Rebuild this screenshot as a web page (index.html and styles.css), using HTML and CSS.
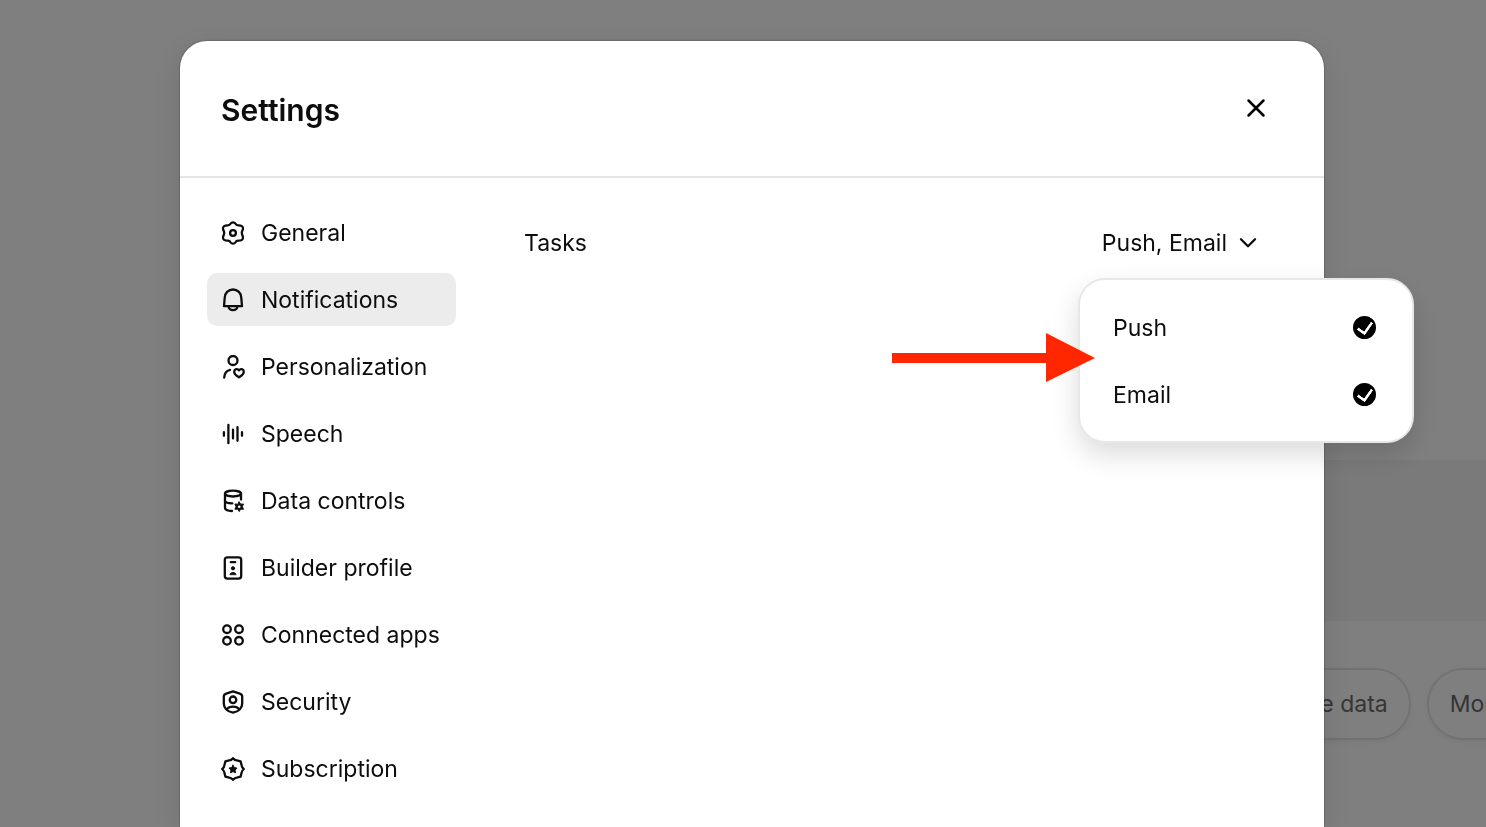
FILE: index.html
```html
<!DOCTYPE html>
<html lang="en">
<head>
    <meta charset="UTF-8">
    <meta name="viewport" content="width=device-width, initial-scale=1.0">
    <title>Settings</title>
    <link rel="stylesheet" href="styles.css">
</head>
<body>
    <!-- Page behind the dialog -->
    <main class="page">
        <div class="composer"></div>
        <div class="chips">
            <button class="chip" type="button">Analyze data</button>
            <button class="chip" type="button">More</button>
        </div>
    </main>

    <div class="overlay">
        <section class="modal" role="dialog" aria-labelledby="modalTitle">
            <header class="modal-header">
                <h2 id="modalTitle">Settings</h2>
                <button class="close" type="button" aria-label="Close">
                    <svg width="20" height="20" viewBox="0 0 20 20"><path d="M2.5 2.5l15 15M17.5 2.5l-15 15"/></svg>
                </button>
            </header>

            <div class="modal-body">
                <nav class="sidebar">
                    <button class="tab" type="button">
                        <svg class="icon" viewBox="0 0 24 24"><path d="M9.7 2.5C10.7 .9 13.3 .9 14.3 2.5C15 3.8 16 4.3 17.3 4.3C20.2 4.2 22.4 5.5 22 8C21.8 9.4 20.8 10.2 20.8 12C20.8 13.8 21.8 14.6 22 16C22.4 18.5 20.2 19.8 17.3 19.7C16 19.7 15 20.2 14.3 21.5C13.3 23.1 10.7 23.1 9.7 21.5C9 20.2 8 19.7 6.7 19.7C3.8 19.8 1.6 18.5 2 16C2.2 14.6 3.2 13.8 3.2 12C3.2 10.2 2.2 9.4 2 8C1.6 5.5 3.8 4.2 6.7 4.3C8 4.3 9 3.8 9.7 2.5Z"/><circle cx="12" cy="12" r="2.9"/></svg>
                        General
                    </button>
                    <button class="tab active" type="button">
                        <svg class="icon" viewBox="0 0 24 24"><path d="M3 18.2L3.7 9.8A8.3 8.3 0 0 1 20.3 9.8L21 18.2Z"/><path d="M7.6 18.6A4.4 3.6 0 0 0 16.4 18.6"/></svg>
                        Notifications
                    </button>
                    <button class="tab" type="button">
                        <svg class="icon" viewBox="0 0 24 24"><circle cx="12" cy="5.5" r="4.5"/><path d="M3.2 22.6C3.4 18.8 5.4 15.8 9 14.9"/><path d="M18 22.3C14.8 20.4 13.1 18.5 13.2 16.6C13.3 14 16.5 13.3 18 15.4C19.5 13.3 22.7 14 22.8 16.6C22.9 18.5 21.2 20.4 18 22.3Z"/></svg>
                        Personalization
                    </button>
                    <button class="tab" type="button">
                        <svg class="icon" viewBox="0 0 24 24"><path d="M2.9 10.2v3.6M7.4 2.8v18.4M12 7.6v8.8M16.5 5.2v13.6M21 10.2v3.6"/></svg>
                        Speech
                    </button>
                    <button class="tab" type="button">
                        <svg class="icon" viewBox="0 0 24 24"><ellipse cx="12" cy="4.6" rx="8" ry="2.9"/><path d="M4 4.6v14.2C4 20.6 6.6 21.8 11 22"/><path d="M4 11.7C4 13.2 7 14.2 11.3 14.4"/><path d="M20 4.6v6"/><path class="solid" d="M18.2 12.9l1.5 2.3 2.8-.2-1.2 2.7 1.2 2.6-2.8-.2-1.5 2.4-1.5-2.4-2.8 .2 1.2-2.6-1.2-2.7 2.8 .2Z"/><circle class="hole" cx="18.2" cy="17.7" r="1.3"/></svg>
                        Data controls
                    </button>
                    <button class="tab" type="button">
                        <svg class="icon" viewBox="0 0 24 24"><rect x="3.8" y="1.4" width="16.4" height="21.2" rx="2.6"/><path d="M9.8 6.2h4.4"/><circle class="solid" cx="12" cy="12.3" r="1.6"/><path class="solid" d="M9 18.3C9.4 16 14.6 16 15 18.3Z"/></svg>
                        Builder profile
                    </button>
                    <button class="tab" type="button">
                        <svg class="icon" viewBox="0 0 24 24"><circle cx="6" cy="6.2" r="3.8"/><circle cx="18" cy="6.2" r="3.8"/><circle cx="6" cy="17.8" r="3.8"/><circle cx="18" cy="17.8" r="3.8"/></svg>
                        Connected apps
                    </button>
                    <button class="tab" type="button">
                        <svg class="icon" viewBox="0 0 24 24"><path d="M12 1.3L18.8 3.6C20.3 4.1 21.2 5 21.2 6.6V13.5C21.2 17.5 18 21.5 12 22.7C6 21.5 2.8 17.5 2.8 13.5V6.6C2.8 5 3.7 4.1 5.2 3.6Z"/><circle cx="12" cy="9.8" r="3.3"/><path d="M6 19.2C8.2 15.7 15.8 15.7 18 19.2"/></svg>
                        Security
                    </button>
                    <button class="tab" type="button">
                        <svg class="icon" viewBox="0 0 24 24"><path d="M12 1.2Q13.8 3.3 15.8 3.4L19.6 4.4L20.6 8.2Q20.7 10.2 22.8 12Q20.7 13.8 20.6 15.8L19.6 19.6L15.8 20.6Q13.8 20.7 12 22.8Q10.2 20.7 8.2 20.6L4.4 19.6L3.4 15.8Q3.3 13.8 1.2 12Q3.3 10.2 3.4 8.2L4.4 4.4L8.2 3.4Q10.2 3.3 12 1.2Z"/><path class="solid" d="M12 8.2l1.3 2.4 2.7 .5-1.9 2 .4 2.7-2.5-1.2-2.5 1.2 .4-2.7-1.9-2 2.7-.5Z"/></svg>
                        Subscription
                    </button>
                </nav>

                <div class="content">
                    <div class="setting">
                        <span>Tasks</span>
                        <div class="dropdown">
                            <button class="dropdown-toggle" type="button" aria-haspopup="true" aria-expanded="true">
                                Push, Email
                                <svg width="18" height="18" viewBox="0 0 18 18"><path d="M2 5.2l7 7 7-7"/></svg>
                            </button>
                            <div class="menu">
                                <label class="menu-item" for="push">Push <input id="push" type="checkbox" checked></label>
                                <label class="menu-item" for="email">Email <input id="email" type="checkbox" checked></label>
                            </div>
                            <svg class="arrow" width="203" height="50" viewBox="0 0 203 50"><path d="M0 20h154V0l49 25-49 24V30H0Z"/></svg>
                        </div>
                    </div>
                </div>
            </div>
        </section>
    </div>
</body>
</html>
```
FILE: styles.css
```css
* {
    box-sizing: border-box;
}
body {
    margin: 0;
    height: 100vh;
    overflow: hidden;
    background-color: #fff;
    color: #0d0d0d;
    font-family: Inter, "Liberation Sans", sans-serif;
    font-size: 23px;
    line-height: 32px;
}
button {
    font: inherit;
    color: inherit;
    border: none;
    background: none;
    padding: 0;
    cursor: pointer;
}
svg {
    flex: none;
    fill: none;
    stroke: currentColor;
    stroke-width: 2.3;
    stroke-linecap: round;
    stroke-linejoin: round;
}

/* Page behind the dialog */
.page {
    padding-top: 460px;
}
.composer {
    height: 161px;
    margin-left: 180px;
    background-color: #f4f4f4;
}
.chips {
    display: flex;
    justify-content: flex-end;
    gap: 16px;
    margin: 47px -43px 0 0;
}
.chip {
    padding: 18px 21px;
    border: 2px solid #e5e5e5;
    border-radius: 36px;
    color: #6b6b6b;
    box-shadow: 0 2px 6px rgba(0, 0, 0, 0.06);
}

/* Dialog */
.overlay {
    position: fixed;
    inset: 0;
    display: flex;
    padding: 41px 162px 0 180px;
    background-color: rgba(0, 0, 0, 0.5);
}
.modal {
    flex: 1;
    background-color: #fff;
    border-radius: 27px 27px 0 0;
    box-shadow: 0 8px 32px rgba(0, 0, 0, 0.12), 0 0 2px rgba(0, 0, 0, 0.5);
}
.modal-header {
    display: flex;
    align-items: center;
    justify-content: space-between;
    padding: 49px 58px 46px 41px;
    border-bottom: 2px solid #e5e5e5;
}
.modal-header h2 {
    margin: 0;
    font-size: 30px;
    font-weight: 600;
    line-height: 40px;
}
.close {
    display: flex;
    padding-bottom: 4px;
}
.close svg {
    stroke: #000;
    stroke-width: 2.5;
}
.modal-body {
    display: flex;
    padding: 28px 27px 0;
}

/* Tabs on the left */
.sidebar {
    display: flex;
    flex-direction: column;
    gap: 14px;
    width: 249px;
}
.tab {
    display: flex;
    align-items: center;
    gap: 16px;
    height: 53px;
    padding: 0 14px;
    border-radius: 10px;
    text-align: left;
    white-space: nowrap;
}
.tab.active {
    background-color: #ececec;
}
.icon {
    width: 24px;
    height: 24px;
}
.icon .solid {
    fill: currentColor;
    stroke-width: 1;
}
.icon .hole {
    fill: #fff;
    stroke: none;
}

/* Selected tab content */
.content {
    flex: 1;
    padding: 21px 40px 0 68px;
}
.setting {
    display: flex;
    justify-content: space-between;
}
.dropdown {
    position: relative;
}
.dropdown-toggle {
    display: flex;
    align-items: center;
    gap: 12px;
}
.menu {
    position: absolute;
    top: 51px;
    right: -157px;
    width: 336px;
    padding: 14px 36px 13px 33px;
    border: 2px solid #e7e7e7;
    border-radius: 27px;
    background-color: #fff;
    box-shadow: 0 12px 28px rgba(0, 0, 0, 0.14);
}
.menu-item {
    display: flex;
    align-items: center;
    justify-content: space-between;
    height: 67px;
    cursor: pointer;
}
.menu-item input {
    appearance: none;
    display: flex;
    align-items: center;
    justify-content: center;
    width: 23px;
    height: 23px;
    margin: 0;
    border: 2px solid #000;
    border-radius: 50%;
}
.menu-item input:checked {
    background-color: #000;
}
.menu-item input:checked::after {
    content: "";
    width: 7px;
    height: 12px;
    margin-bottom: 2px;
    border: solid #fff;
    border-width: 0 3px 3px 0;
    border-radius: 1px;
    transform: rotate(35deg);
}
.arrow {
    position: absolute;
    top: 106px;
    right: 162px;
    fill: #ff2600;
    stroke: none;
    pointer-events: none;
}
```
